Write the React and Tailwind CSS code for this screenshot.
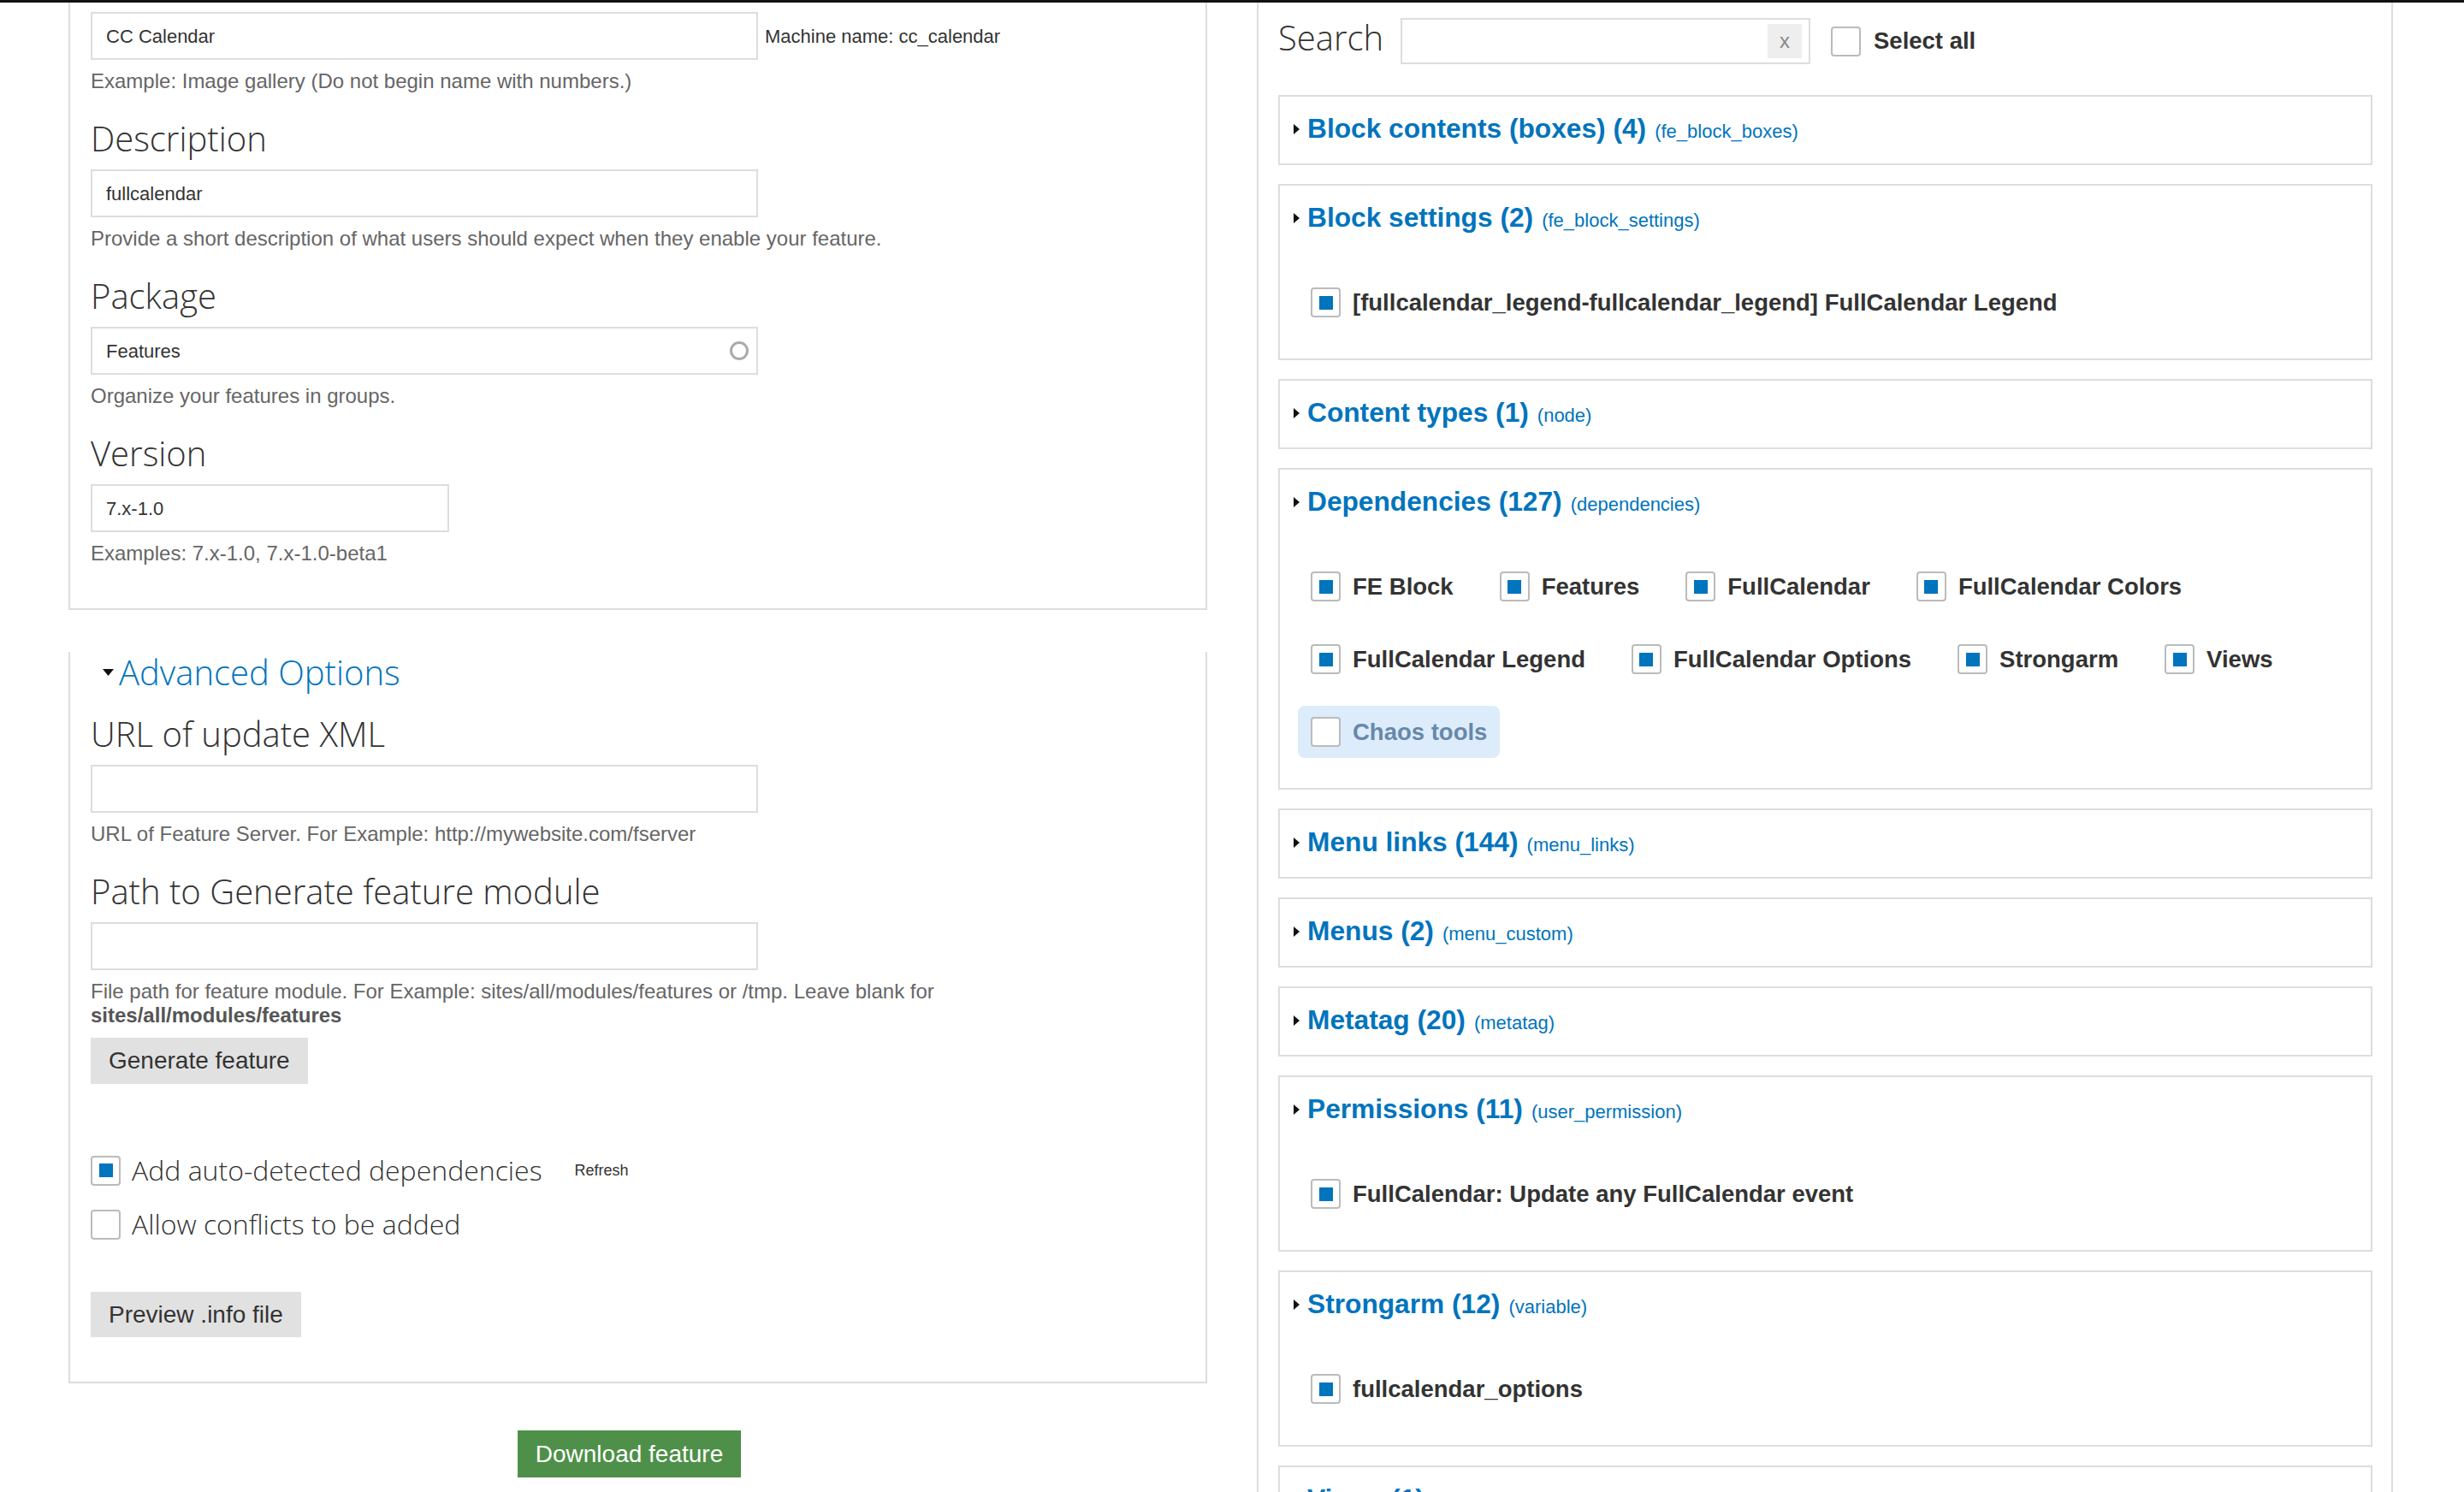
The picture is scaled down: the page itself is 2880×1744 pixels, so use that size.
import React from "react";

const heading = "font-['Open_Sans',sans-serif] font-light text-[40px] leading-[48px] text-[#333]";
const help = "mt-[11px] text-[24px] leading-[28px] text-[#666]";
const input = "h-[56px] border-2 border-[#ddd] bg-white px-[16px] flex items-center text-[22px] text-[#333]";

function Checkbox({ checked }) {
  return (
    <span className="w-[35px] h-[35px] shrink-0 rounded-[4px] border-2 border-[#bbb] bg-white flex items-center justify-center">
      {checked && <span className="w-[16px] h-[16px] bg-[#0074bd]" />}
    </span>
  );
}

function Field({ label, value, hint, width = "w-[780px]", extra, children }) {
  return (
    <div>
      {label && <h2 className={`${heading} mt-[29px] mb-[12px]`}>{label}</h2>}
      <div className="flex items-center gap-[8px]">
        <div className={`${input} ${width} justify-between`}>
          <span>{value}</span>
          {extra}
        </div>
        {children}
      </div>
      <div className={help}>{hint}</div>
    </div>
  );
}

function Item({ label, checked = true, muted = false }) {
  return (
    <div
      className={`flex items-center gap-[14px] px-[15px] py-[13px] rounded-[8px] ${
        muted ? "bg-[#ddecfb]" : ""
      }`}
    >
      <Checkbox checked={checked} />
      <span
        className={`text-[27.5px] leading-[35px] font-bold whitespace-nowrap ${
          muted ? "text-[#6788aa]" : "text-[#333]"
        }`}
      >
        {label}
      </span>
    </div>
  );
}

function Group({ title, count, machine, items }) {
  return (
    <div className="border-2 border-[#ddd] pt-[18px] pb-[20px]">
      <div className="h-[40px] flex items-center pl-[15px]">
        <svg width="9" height="14" viewBox="0 0 9 14" className="mr-[8px]">
          <path d="M1 1L8 7L1 13z" fill="#111" />
        </svg>
        <span className="text-[31.7px] font-bold text-[#0074bd] whitespace-nowrap">
          {title} ({count})
        </span>
        <span className="ml-[10px] text-[22px] text-[#0074bd] mt-[4px] whitespace-nowrap">({machine})</span>
      </div>
      {items && (
        <div className="mt-[48px] pb-[15px] pl-[21px] pr-[21px] flex flex-wrap gap-x-[24px] gap-y-[24px]">
          {items.map((it) => (
            <Item key={it.label} {...it} />
          ))}
        </div>
      )}
    </div>
  );
}

const groups = [
  { title: "Block contents (boxes)", count: 4, machine: "fe_block_boxes" },
  {
    title: "Block settings",
    count: 2,
    machine: "fe_block_settings",
    items: [{ label: "[fullcalendar_legend-fullcalendar_legend] FullCalendar Legend" }],
  },
  { title: "Content types", count: 1, machine: "node" },
  {
    title: "Dependencies",
    count: 127,
    machine: "dependencies",
    items: [
      { label: "FE Block" },
      { label: "Features" },
      { label: "FullCalendar" },
      { label: "FullCalendar Colors" },
      { label: "FullCalendar Legend" },
      { label: "FullCalendar Options" },
      { label: "Strongarm" },
      { label: "Views" },
      { label: "Chaos tools", checked: false, muted: true },
    ],
  },
  { title: "Menu links", count: 144, machine: "menu_links" },
  { title: "Menus", count: 2, machine: "menu_custom" },
  { title: "Metatag", count: 20, machine: "metatag" },
  {
    title: "Permissions",
    count: 11,
    machine: "user_permission",
    items: [{ label: "FullCalendar: Update any FullCalendar event" }],
  },
  {
    title: "Strongarm",
    count: 12,
    machine: "variable",
    items: [{ label: "fullcalendar_options" }],
  },
  { title: "Views", count: 1, machine: "views_view" },
];

export default function App() {
  return (
    <div className="h-[1744px] overflow-hidden bg-white border-t-[3px] border-[#111] font-['Liberation_Sans',Arial,sans-serif]">
      <div className="flex pl-[80px] gap-[58px]">
        {/* left column */}
        <div className="w-[1331px] shrink-0">
          <div className="border-x-2 border-b-2 border-[#ddd] pl-[24px] pt-[11px] pb-[50px]">
            <Field value="CC Calendar" hint="Example: Image gallery (Do not begin name with numbers.)">
              <span className="text-[22px] text-[#333]">Machine name: cc_calendar</span>
            </Field>
            <Field
              label="Description"
              value="fullcalendar"
              hint="Provide a short description of what users should expect when they enable your feature."
            />
            <Field
              label="Package"
              value="Features"
              hint="Organize your features in groups."
              extra={<span className="w-[22px] h-[22px] rounded-full border-[3px] border-[#aaa] -mr-[7px]" />}
            />
            <Field
              label="Version"
              value="7.x-1.0"
              width="w-[419px]"
              hint="Examples: 7.x-1.0, 7.x-1.0-beta1"
            />
          </div>

          <div className="mt-[73px] border-x-2 border-b-2 border-[#ddd] pl-[24px] pb-[52px]">
            <div className="-mt-[24px] h-[48px] flex items-center ml-[14px]">
              <svg width="13" height="8" viewBox="0 0 13 8" className="mr-[6px]">
                <path d="M0 0H13L6.5 8z" fill="#111" />
              </svg>
              <span className="font-['Open_Sans',sans-serif] font-light text-[40px] leading-[48px] text-[#0074bd]">
                Advanced Options
              </span>
            </div>
            <h2 className={`${heading} mt-[24px] mb-[12px]`}>URL of update XML</h2>
            <div className={`${input} w-[780px]`} />
            <div className={help}>URL of Feature Server. For Example: http://mywebsite.com/fserver</div>
            <h2 className={`${heading} mt-[29px] mb-[12px]`}>Path to Generate feature module</h2>
            <div className={`${input} w-[780px]`} />
            <div className={help}>
              File path for feature module. For Example: sites/all/modules/features or /tmp. Leave blank for
              <br />
              <strong className="text-[#555]">sites/all/modules/features</strong>
            </div>
            <button className="mt-[12px] h-[54px] px-[21px] bg-[#e1e1e1] text-[28px] text-[#333]">
              Generate feature
            </button>

            <div className="mt-[77px] h-[48px] flex items-center gap-[13px]">
              <Checkbox checked />
              <span className="font-['Open_Sans',sans-serif] font-light text-[32px] text-[#333]">
                Add auto-detected dependencies
              </span>
              <span className="ml-[25px] text-[18px] text-[#333]">Refresh</span>
            </div>
            <div className="mt-[15px] h-[48px] flex items-center gap-[13px]">
              <Checkbox />
              <span className="font-['Open_Sans',sans-serif] font-light text-[32px] text-[#333]">
                Allow conflicts to be added
              </span>
            </div>
            <button className="mt-[55px] h-[53px] px-[21px] bg-[#e1e1e1] text-[28px] text-[#333]">
              Preview .info file
            </button>
          </div>

          <div className="mt-[55px] flex justify-center pr-[20px]">
            <button className="h-[55px] px-[21px] bg-[#4e9049] text-[28px] text-white">Download feature</button>
          </div>
        </div>

        {/* right column */}
        <div className="w-[1328px] shrink-0 h-[1741px] border-x-2 border-[#ddd] pl-[23px] pr-[22px] pt-[18px]">
          <div className="h-[54px] flex items-center">
            <span className="font-['Open_Sans',sans-serif] font-light text-[40px] leading-[48px] text-[#333] w-[143px] -mt-[8px]">
              Search
            </span>
            <div className="w-[479px] h-[54px] border-2 border-[#ddd] flex items-center justify-end pr-[8px]">
              <span className="w-[40px] h-[40px] bg-[#eee] text-[#888] text-[24px] flex items-center justify-center">
                x
              </span>
            </div>
            <div className="ml-[24px] flex items-center gap-[15px]">
              <Checkbox />
              <span className="text-[27.5px] font-bold text-[#333]">Select all</span>
            </div>
          </div>
          <div className="mt-[36px] flex flex-col gap-[22px]">
            {groups.map((g) => (
              <Group key={g.title} {...g} />
            ))}
          </div>
        </div>
      </div>
    </div>
  );
}
